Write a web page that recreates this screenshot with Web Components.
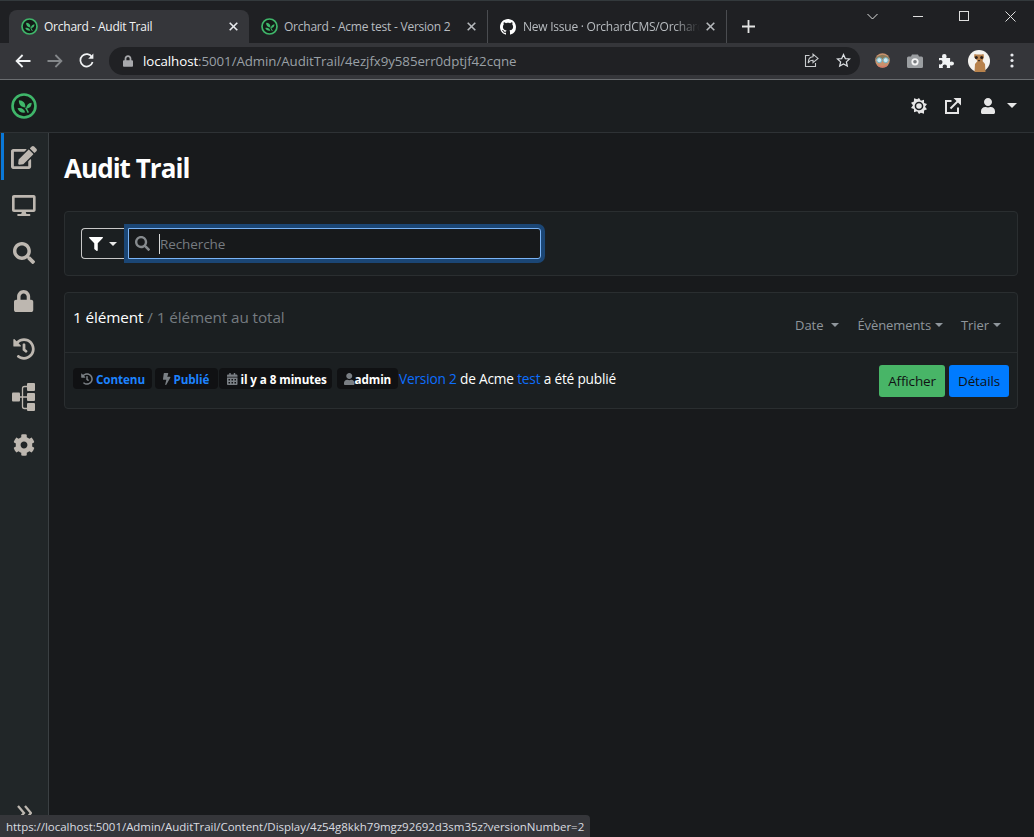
<!DOCTYPE html>
<html lang="fr"><head><meta charset="utf-8"><title>Orchard - Audit Trail</title>
<style>
html,body{margin:0;height:100%;background:#181a1c;overflow:hidden}
body{font-family:"Open Sans","Noto Sans","Liberation Sans",sans-serif}
</style></head><body>
<browser-window>
  <win-tabstrip slot="tabs">
    <browser-tab active label="Orchard - Audit Trail" icon="orchard"></browser-tab>
    <browser-tab label="Orchard - Acme test - Version 2" icon="orchard"></browser-tab>
    <browser-tab fade label="New Issue · OrchardCMS/OrchardCore" icon="github"></browser-tab>
  </win-tabstrip>
  <win-toolbar slot="toolbar"></win-toolbar>
  <admin-navbar slot="nav"></admin-navbar>
  <admin-sidebar slot="side"></admin-sidebar>
  <audit-page slot="main"></audit-page>
  <status-bubble slot="status">https://localhost:5001/Admin/AuditTrail/Content/Display/4z54g8kkh79mgz92692d3sm35z?versionNumber=2</status-bubble>
</browser-window>
<script>
const ICONS={
search:[512,512,"M505 442.7L405.3 343c-4.5-4.5-10.6-7-17-7H372c27.6-35.3 44-79.7 44-128C416 93.1 322.9 0 208 0S0 93.1 0 208s93.1 208 208 208c48.3 0 92.7-16.4 128-44v16.3c0 6.4 2.5 12.5 7 17l99.7 99.7c9.4 9.4 24.6 9.4 33.9 0l28.3-28.3c9.4-9.4 9.4-24.6.1-34zM208 336c-70.7 0-128-57.2-128-128 0-70.7 57.2-128 128-128 70.7 0 128 57.2 128 128 0 70.7-57.2 128-128 128z"],
lock:[448,512,"M400 224h-24v-72C376 68.2 307.8 0 224 0S72 68.2 72 152v72H48c-26.5 0-48 21.5-48 48v192c0 26.5 21.5 48 48 48h352c26.5 0 48-21.5 48-48V272c0-26.5-21.5-48-48-48zm-104 0H152v-72c0-39.7 32.3-72 72-72s72 32.3 72 72v72z"],
desktop:[576,512,"M528 0H48C21.5 0 0 21.5 0 48v320c0 26.5 21.5 48 48 48h192l-16 48h-72c-13.3 0-24 10.7-24 24s10.7 24 24 24h272c13.3 0 24-10.7 24-24s-10.7-24-24-24h-72l-16-48h192c26.5 0 48-21.5 48-48V48c0-26.5-21.5-48-48-48zm-16 352H64V64h448v288z"],
history:[512,512,"M504 255.531c.253 136.64-111.18 248.372-247.82 248.468-59.015.042-113.223-20.53-155.822-54.911-11.077-8.94-11.905-25.541-1.839-35.607l11.267-11.267c8.609-8.609 22.353-9.551 31.891-1.984C173.062 425.135 212.781 440 256 440c101.705 0 184-82.311 184-184 0-101.705-82.311-184-184-184-48.814 0-93.149 18.969-126.068 49.932l50.754 50.754c10.08 10.08 2.941 27.314-11.313 27.314H24c-8.837 0-16-7.163-16-16V38.627c0-14.254 17.234-21.393 27.314-11.314l49.372 49.372C129.209 34.136 189.552 8 256 8c136.81 0 247.747 110.78 248 247.531zm-180.912 78.784l9.823-12.63c8.138-10.463 6.253-25.542-4.21-33.679L288 256.349V152c0-13.255-10.745-24-24-24h-16c-13.255 0-24 10.745-24 24v135.651l65.409 50.874c10.463 8.137 25.541 6.253 33.679-4.21z"],
cog:[512,512,"M487.4 315.7l-42.6-24.6c4.3-23.2 4.3-47 0-70.2l42.6-24.6c4.9-2.8 7.1-8.6 5.5-14-11.1-35.6-30-67.8-54.7-94.6-3.8-4.1-10-5.1-14.8-2.3L380.8 110c-17.9-15.4-38.5-27.3-60.8-35.1V25.8c0-5.6-3.9-10.5-9.4-11.7-36.7-8.2-74.3-7.8-109.2 0-5.5 1.2-9.4 6.1-9.4 11.7V75c-22.2 7.9-42.8 19.8-60.8 35.1L88.7 85.5c-4.9-2.8-11-1.9-14.8 2.3-24.7 26.7-43.6 58.9-54.7 94.6-1.7 5.4.6 11.2 5.5 14L67.3 221c-4.3 23.2-4.3 47 0 70.2l-42.6 24.6c-4.9 2.8-7.1 8.6-5.5 14 11.1 35.6 30 67.8 54.7 94.6 3.8 4.1 10 5.1 14.8 2.3l42.6-24.6c17.9 15.4 38.5 27.3 60.8 35.1v49.2c0 5.6 3.9 10.5 9.4 11.7 36.7 8.2 74.3 7.8 109.2 0 5.5-1.2 9.4-6.1 9.4-11.7v-49.2c22.2-7.9 42.8-19.8 60.8-35.1l42.6 24.6c4.9 2.8 11 1.9 14.8-2.3 24.7-26.7 43.6-58.9 54.7-94.6 1.5-5.5-.7-11.3-5.6-14.1zM256 336c-44.1 0-80-35.9-80-80s35.9-80 80-80 80 35.9 80 80-35.9 80-80 80z"],
user:[448,512,"M224 256c70.7 0 128-57.3 128-128S294.7 0 224 0 96 57.3 96 128s57.3 128 128 128zm89.6 32h-16.7c-22.2 10.2-46.9 16-72.9 16s-50.6-5.8-72.9-16h-16.7C60.2 288 0 348.2 0 422.4V464c0 26.5 21.5 48 48 48h352c26.5 0 48-21.5 48-48v-41.6c0-74.2-60.2-134.4-134.4-134.4z"],
filter:[512,512,"M487.976 0H24.028C2.71 0-8.047 25.866 7.058 40.971L192 225.941V432c0 7.831 3.821 15.17 10.237 19.662l80 55.98C298.02 518.69 320 507.493 320 487.98V225.941l184.947-184.97C520.021 25.896 509.338 0 487.976 0z"],
bolt:[320,512,"M296 160H180.6l42.6-129.8C227.2 15 215.7 0 200 0H56C44 0 33.8 8.9 32.2 20.8l-32 240C-1.7 275.2 9.5 288 24 288h118.7L96.6 482.5c-3.6 15.2 8 29.5 23.3 29.5 8.4 0 16.4-4.4 20.8-12l176-304c9.3-15.9-2.2-36-20.7-36z"],
calendar:[448,512,"M0 464c0 26.5 21.5 48 48 48h352c26.5 0 48-21.5 48-48V192H0v272zm320-196c0-6.6 5.4-12 12-12h40c6.6 0 12 5.4 12 12v40c0 6.6-5.4 12-12 12h-40c-6.6 0-12-5.4-12-12v-40zm0 128c0-6.6 5.4-12 12-12h40c6.6 0 12 5.4 12 12v40c0 6.6-5.4 12-12 12h-40c-6.6 0-12-5.4-12-12v-40zM192 268c0-6.6 5.4-12 12-12h40c6.6 0 12 5.4 12 12v40c0 6.6-5.4 12-12 12h-40c-6.6 0-12-5.4-12-12v-40zm0 128c0-6.6 5.4-12 12-12h40c6.6 0 12 5.4 12 12v40c0 6.6-5.4 12-12 12h-40c-6.6 0-12-5.4-12-12v-40zM64 268c0-6.6 5.4-12 12-12h40c6.6 0 12 5.4 12 12v40c0 6.6-5.4 12-12 12H76c-6.6 0-12-5.4-12-12v-40zm0 128c0-6.6 5.4-12 12-12h40c6.6 0 12 5.4 12 12v40c0 6.6-5.4 12-12 12H76c-6.6 0-12-5.4-12-12v-40zM400 64h-48V16c0-8.8-7.2-16-16-16h-32c-8.8 0-16 7.2-16 16v48H160V16c0-8.8-7.2-16-16-16h-32c-8.8 0-16 7.2-16 16v48H48C21.5 64 0 85.5 0 112v48h448v-48c0-26.5-21.5-48-48-48z"],
edit:[576,512,"M402.6 83.2l90.2 90.2c3.8 3.8 3.8 10 0 13.8L274.4 405.6l-92.8 10.3c-12.4 1.4-22.9-9.1-21.5-21.5l10.3-92.8L388.8 83.2c3.8-3.8 10-3.8 13.8 0zm162-22.9l-48.8-48.8c-15.2-15.2-39.9-15.2-55.2 0l-35.4 35.4c-3.8 3.8-3.8 10 0 13.8l90.2 90.2c3.8 3.8 10 3.8 13.8 0l35.4-35.4c15.2-15.3 15.2-40 0-55.2zM384 346.2V448H64V128h229.8c3.2 0 6.2-1.3 8.5-3.5l40-40c7.6-7.6 2.2-20.5-8.5-20.5H48C21.5 64 0 85.5 0 112v352c0 26.5 21.5 48 48 48h352c26.5 0 48-21.5 48-48V306.2c0-10.7-12.9-16-20.5-8.5l-40 40c-2.2 2.3-3.5 5.3-3.5 8.5z"],
github:[16,16,"M8 0C3.58 0 0 3.58 0 8c0 3.54 2.29 6.53 5.47 7.59.4.07.55-.17.55-.38 0-.19-.01-.82-.01-1.49-2.01.37-2.53-.49-2.69-.94-.09-.23-.48-.94-.82-1.13-.28-.15-.68-.52-.01-.53.63-.01 1.08.58 1.23.82.72 1.21 1.87.87 2.33.66.07-.52.28-.87.51-1.07-1.78-.2-3.64-.89-3.64-3.95 0-.87.31-1.59.82-2.15-.08-.2-.36-1.02.08-2.12 0 0 .67-.21 2.2.82.64-.18 1.32-.27 2-.27.68 0 1.36.09 2 .27 1.53-1.04 2.2-.82 2.2-.82.44 1.1.16 1.92.08 2.12.51.56.82 1.27.82 2.15 0 3.07-1.87 3.75-3.65 3.95.29.25.54.73.54 1.48 0 1.07-.01 1.93-.01 2.2 0 .21.15.46.55.38A8.013 8.013 0 0016 8c0-4.42-3.58-8-8-8z"]
};
class Base extends HTMLElement{
  render(h){if(!this.shadowRoot)this.attachShadow({mode:'open'});this.shadowRoot.innerHTML=h}
}
const svg=(n,fill)=>{const[w,h,d]=ICONS[n];return `<svg viewBox="0 0 ${w} ${h}" width="100%" height="100%" fill="${fill||'currentColor'}"><path d="${d}"/></svg>`};
class FaIcon extends Base{connectedCallback(){
  const n=this.getAttribute('name'),s=this.getAttribute('size')||14;
  const[w,h]=ICONS[n];
  this.render(`<style>:host{display:inline-flex;flex:none;width:${s*w/h}px;height:${s}px;color:inherit}svg{display:block}</style>${svg(n)}`);
}}
customElements.define('fa-icon',FaIcon);
class OrchardLogo extends Base{connectedCallback(){
  const s=this.getAttribute('size')||16;
  this.render(`<style>:host{display:inline-flex;flex:none;width:${s}px;height:${s}px}svg{display:block}</style>
  <svg viewBox="0 0 24 24" width="100%" height="100%"><circle cx="12" cy="12" r="10.6" fill="#141a17" stroke="#3fb66a" stroke-width="2.4"/>
  <path d="M13.200 13.400C9.200 13.200 6.900 10.600 7.300 6.800 11.200 6.900 13.600 9.500 13.200 13.400Z" fill="#3fb66a"/>
  <path d="M14 14.200C14.200 11.200 16 9.200 19 8.900 19.200 12 17.200 14.200 14 14.200Z" fill="#3fb66a"/>
  <path d="M13.200 18C10 18.600 7.300 17.200 6 14.200 9.400 13.200 12.200 14.800 13.200 18Z" fill="#3fb66a"/>
  <path d="M13.600 13.600L16 18.200" stroke="#3fb66a" stroke-width="1.400"/></svg>`);
}}
customElements.define('orchard-logo',OrchardLogo);
class BrowserWindow extends Base{connectedCallback(){
  this.render(`<style>
  :host{display:flex;flex-direction:column;position:relative;width:1034px;height:837px;overflow:hidden;background:#181a1c;color:#fff}
  .body{flex:1;display:flex;min-height:0}
  ::slotted([slot=main]){flex:1;min-width:0}
  </style>
  <slot name="tabs"></slot><slot name="toolbar"></slot><slot name="nav"></slot>
  <div class="body"><slot name="side"></slot><slot name="main"></slot></div>
  <slot name="status"></slot>`);
}}
customElements.define('browser-window',BrowserWindow);
class WinTabstrip extends Base{connectedCallback(){
  this.render(`<style>
  :host{display:flex;height:43px;background:#1f2023;box-sizing:border-box;padding:9px 1px 0 9px;position:relative;border-top:1px solid #33393c}
  .tabs{display:flex;height:33px}
  .new{width:42px;height:26px;display:flex;align-items:center;justify-content:center;color:#e3e3e3;margin-top:3px}
  .ctl{margin-left:auto;margin-top:-9px;display:flex;height:30px;color:#dfdfdf}
  .ctl span{width:46px;display:flex;align-items:center;justify-content:center}
  svg{display:block}
  </style>
  <div class="tabs"><slot></slot></div>
  <div class="new"><svg width="13" height="13" viewBox="0 0 13 13"><path d="M6.500 0v13M0 6.500h13" stroke="currentColor" stroke-width="1.800"/></svg></div>
  <div class="ctl">
   <span><svg width="11" height="7" viewBox="0 0 11 7"><path d="M.5 1l5 5 5-5" fill="none" stroke="currentColor"/></svg></span>
   <span><svg width="10" height="1"><rect width="10" height="1" fill="currentColor"/></svg></span>
   <span><svg width="10" height="10"><rect x=".5" y=".5" width="9" height="9" fill="none" stroke="currentColor"/></svg></span>
   <span><svg width="11" height="11" viewBox="0 0 11 11"><path d="M.5.5l10 10M10.500.5l-10 10" stroke="currentColor"/></svg></span>
  </div>`);
}}
customElements.define('win-tabstrip',WinTabstrip);
class BrowserTab extends Base{connectedCallback(){
  const a=this.hasAttribute('active'),ic=this.getAttribute('icon');
  const mask=this.hasAttribute('fade')?'-webkit-mask-image:linear-gradient(90deg,#000 85%,transparent);':'';
  this.render(`<style>
  :host{display:flex;align-items:center;box-sizing:border-box;width:${a?240:239}px;height:33px;padding:0 11px 0 ${a?11:11}px;${a?'background:#35363a;border-radius:8px 8px 0 0;':''}position:relative;font:12px "Open Sans","Noto Sans",sans-serif;color:${a?'#f1f3f4':'#b8bcc0'};${a?'':'border-right:1px solid #4a4c50;background-clip:padding-box;'}}
  .ic{display:flex;width:18px;height:18px;margin-right:6px;flex:none;color:#fff;align-items:center;justify-content:center}
  .t{flex:1;white-space:nowrap;overflow:hidden;letter-spacing:-.24px;${mask}}
  svg{display:block}
  </style>
  <span class="ic">${ic==='github'?`<fa-icon name="github" size="16"></fa-icon>`:`<orchard-logo size="17"></orchard-logo>`}</span>
  <span class="t">${this.getAttribute('label')}</span>
  <svg width="9" height="9" viewBox="0 0 9 9" style="flex:none;margin-left:6px"><path d="M.7.7l7.600 7.600M8.300.7L.7 8.300" stroke="${a?'#e8eaed':'#b5b8bc'}" stroke-width="1.600"/></svg>`);
}}
customElements.define('browser-tab',BrowserTab);
class WinToolbar extends Base{connectedCallback(){
  this.render(`<style>
  :host{display:flex;align-items:center;height:37px;box-sizing:border-box;background:#35363a;border-bottom:1px solid #6a6d70;padding:0 0 1px 0;color:#dcdfe2}
  .nav{display:flex;width:109px;flex:none;padding-left:15px;box-sizing:border-box;gap:16px;align-items:center}
  .omni{width:751px;height:28px;border-radius:14px;background:#202124;display:flex;align-items:center;box-sizing:border-box;padding-left:14px;flex:none;font:13.300px "Open Sans","Noto Sans",sans-serif;letter-spacing:-.07px;color:#9aa0a6}
  .omni b{font-weight:400;color:#fff}
  .url{margin-left:10px;flex:1;white-space:nowrap}
  .r{display:flex;gap:17px;padding-right:9px;align-items:center;color:#c9ccce}
  .ext{display:flex;align-items:center;flex:none}
  svg{display:block}
  </style>
  <div class="nav">
   <svg width="16" height="14" viewBox="0 0 16 14"><path d="M15.500 7H2M7.600 1L1.600 7l6 6" fill="none" stroke="#f1f3f4" stroke-width="1.800"/></svg>
   <svg width="16" height="14" viewBox="0 0 16 14"><path d="M.5 7H14M8.400 1l6 6-6 6" fill="none" stroke="#84878a" stroke-width="1.800"/></svg>
   <svg width="15" height="15" viewBox="0 0 15 15"><path d="M13 4.200A6.200 6.200 0 1 0 13.600 9" fill="none" stroke="#f1f3f4" stroke-width="1.700"/><path d="M14.400.6v5.200H9.200z" fill="#f1f3f4"/></svg>
  </div>
  <div class="omni">
   <svg width="10" height="12" viewBox="0 0 448 512" fill="#a8a9ac"><path d="${ICONS.lock[2]}"/></svg>
   <span class="url"><b>localhost</b>:5001/Admin/AuditTrail/4ezjfx9y585err0dptjf42cqne</span>
   <span class="r">
    <svg width="15" height="15" viewBox="0 0 15 15" fill="none" stroke="#c9ccce" stroke-width="1.100"><path d="M5.500 2.500H1.500v11h10V10"/><path d="M9 1.200l5 4.200-5 4.200V7.200C6.500 7.200 5 8.200 4.200 10 4.200 6.500 6 4 9 3.800z"/></svg>
    <svg width="15" height="15" viewBox="0 0 24 24" fill="none" stroke="#dcdfe2" stroke-width="2"><path d="M12 2.500l2.900 6.400 6.900.7-5.200 4.600 1.500 6.800-6.100-3.500-6.100 3.500 1.500-6.800-5.200-4.600 6.900-.7z"/></svg>
   </span>
  </div>
  <div class="ext" style="margin-left:15px"><svg width="15" height="15" viewBox="0 0 15 15"><circle cx="7.500" cy="7.500" r="7.300" fill="#c9926d"/><path d="M1 4.500Q7.500 -1 14 4.500V6H1z" fill="#8a7a5a"/><circle cx="4.300" cy="7.200" r="2.500" fill="#cfe8ef" stroke="#6fb5c8"/><circle cx="10.700" cy="7.200" r="2.500" fill="#cfe8ef" stroke="#6fb5c8"/><path d="M3 11.500q4.500 3 9 0v1.800q-4.500 2.400-9 0z" fill="#d77a66"/></svg></div>
  <div class="ext" style="margin-left:17px"><svg width="16" height="14" viewBox="0 0 16 14"><path d="M1.500 2.500H4L5 .5h6l1 2h2.500q1.500 0 1.500 1.500v8.500q0 1.500-1.500 1.500h-13Q0 14 0 12.500V4q0-1.500 1.500-1.500z" fill="#9b9ea1"/><circle cx="8" cy="7.800" r="3.600" fill="#f4f4f4"/><circle cx="8" cy="7.800" r="1.800" fill="#7a7d80"/></svg></div>
  <div class="ext" style="margin-left:16px"><svg width="15" height="15" viewBox="0 0 15 15"><path d="M0 5h3.500Q3 4.500 3 3.300 3 1 5.300 1t2.300 2.300q0 1.200-.5 1.700h4V9q.5-.5 1.500-.5Q15 8.500 15 10.500t-2.400 2q-1 0-1.500-.5v3H7.500q.5-.5.500-1.500 0-2-2.200-2t-2.200 2q0 1 .5 1.500H0v-4q.5.500 1.500.500Q3.500 11 3.500 9T1.500 7Q.5 7 0 7.500z" fill="#f1f3f4"/></svg></div>
  <div class="ext" style="margin-left:14px"><svg width="22" height="22" viewBox="0 0 22 22"><circle cx="11" cy="11" r="11" fill="#f5f3ef"/><path d="M6.500 4l2 .5h5l2-.5.5 3-1.500 4 2.500 3 .5 8h-11l.5-8 2.500-3L6 7z" fill="#b8824c"/><circle cx="8.300" cy="7.500" r="1.500" fill="#2d211a"/><circle cx="13.700" cy="7.500" r="1.500" fill="#2d211a"/><path d="M9.800 10h2.400L11 11.800z" fill="#2d211a"/></svg></div>
  <div class="ext" style="margin-left:20px"><svg width="4" height="15" viewBox="0 0 4 15" fill="#e8eaed"><circle cx="2" cy="2" r="1.600"/><circle cx="2" cy="7.500" r="1.600"/><circle cx="2" cy="13" r="1.600"/></svg></div>`);
}}
customElements.define('win-toolbar',WinToolbar);
class AdminNavbar extends Base{connectedCallback(){
  this.render(`<style>
  :host{display:flex;align-items:center;height:53px;box-sizing:border-box;background:#1b1e20;border-bottom:1px solid #2e3235;padding:0 17px 0 11px;color:#e6e6e6}
  .r{margin-left:auto;display:flex;align-items:center}
  svg{display:block}
  .car{width:0;height:0;border:5px solid transparent;border-top-color:#e6e6e6;border-bottom:0;margin-left:12px;margin-top:-2px}
  </style>
  <orchard-logo size="26"></orchard-logo>
  <div class="r">
   <svg width="16" height="16" viewBox="0 0 24 24" fill="#e6e6e6"><path fill-rule="evenodd" d="M12 0l2.800 4 4.700-1.500.1 4.900 4.400 1.700-3 3.900 3 3.900-4.400 1.700-.1 4.900-4.700-1.500L12 24l-2.800-4-4.700 1.500-.1-4.900L0 14.900 3 11 0 7.100l4.400-1.700.1-4.900L9.200 2zM12 5.500a6.500 6.500 0 1 0 0 13 6.500 6.500 0 0 0 0-13zm0 2.300a4.200 4.200 0 1 1 0 8.400 4.200 4.200 0 0 1 0-8.400z"/></svg>
   <svg style="margin-left:18px" width="16" height="16" viewBox="0 0 16 16" fill="none" stroke="#e6e6e6" stroke-width="2"><path d="M6.500 3H1v12h12V9.500"/><path d="M5.500 10.500L15 1"/><path d="M8.500 0H16v7.500z" fill="#e6e6e6" stroke="none"/></svg>
   <fa-icon style="margin-left:20px" name="user" size="16"></fa-icon>
   <span class="car"></span>
  </div>`);
}}
customElements.define('admin-navbar',AdminNavbar);
class SideItem extends Base{connectedCallback(){
  this.render(`<style>
  :host{display:flex;height:48px;align-items:center;justify-content:center;color:#bdb7b0;position:relative;box-sizing:border-box}
  :host([active])::before{content:"";position:absolute;left:1px;top:0;bottom:1px;width:3px;background:#0a78d8}
  </style><slot></slot>`);
}}
customElements.define('side-item',SideItem);
class AdminSidebar extends Base{connectedCallback(){
  this.render(`<style>
  :host{display:flex;flex-direction:column;flex:none;width:49px;box-sizing:border-box;background:#212628;border-right:1px solid #3b4043;color:#bdb7b0;height:100%}
  .foot{margin-top:auto;height:32px;display:flex;justify-content:center;box-sizing:border-box}
  svg{display:block}
  </style>
  <side-item active><fa-icon name="edit" size="23"></fa-icon></side-item>
  <side-item><fa-icon name="desktop" size="21"></fa-icon></side-item>
  <side-item><fa-icon name="search" size="22"></fa-icon></side-item>
  <side-item><fa-icon name="lock" size="22"></fa-icon></side-item>
  <side-item><fa-icon name="history" size="22"></fa-icon></side-item>
  <side-item><svg width="24" height="29" viewBox="0 0 24 29" fill="#bdb7b0"><rect x="0" y="9.500" width="8" height="9" rx="1"/><rect x="15" y="0" width="8" height="8" rx="1"/><rect x="15" y="10" width="8" height="8" rx="1"/><rect x="15" y="20" width="8" height="8" rx="1"/><path d="M8 14h7M15 3.500h-2.500q-2 0-2 2v18q0 2 2 2H15" fill="none" stroke="#bdb7b0" stroke-width="1.300"/></svg></side-item>
  <side-item><fa-icon name="cog" size="22"></fa-icon></side-item>
  <div class="foot"><svg width="15" height="16" viewBox="0 0 15 16" fill="none" stroke="#bdb7b0" stroke-width="2.300"><path d="M1 1l6 7-6 7M8 1l6 7-6 7"/></svg></div>`);
}}
customElements.define('admin-sidebar',AdminSidebar);
class ACard extends Base{connectedCallback(){
  this.render(`<style>:host{display:block;background:#1b1f21;border:1px solid #2a2e30;border-radius:4px;box-sizing:border-box}</style><slot></slot>`);
}}
customElements.define('a-card',ACard);
class TagBadge extends Base{connectedCallback(){
  this.render(`<style>
  :host{display:inline-flex;align-items:center;height:21px;box-sizing:border-box;background:#101113;border-radius:4px;font:700 11.700px "Open Sans","Noto Sans",sans-serif;letter-spacing:-.1px;white-space:nowrap;color:var(--c,#fff);flex:none}
  ::slotted(fa-icon){color:#7a7f84}
  </style><slot></slot>`);
}}
customElements.define('tag-badge',TagBadge);
class DropLink extends Base{connectedCallback(){
  this.render(`<style>
  :host{display:inline-flex;align-items:center;color:#8f969c;font-size:13px;letter-spacing:-.08px;white-space:nowrap}
  .c{width:0;height:0;border:4px solid transparent;border-top-color:#8f969c;border-bottom:0;margin-left:var(--g,4px)}
  </style><slot></slot><span class="c"></span>`);
}}
customElements.define('drop-link',DropLink);
class AuditPage extends Base{connectedCallback(){
  this.render(`<style>
  :host{display:block;box-sizing:border-box;padding:0 16px 0 15px;background:#181a1c;color:#fff;font:14px "Open Sans","Noto Sans",sans-serif}
  h1{margin:0;height:78px;box-sizing:border-box;padding-top:16px;font:700 26px/38px "Open Sans","Noto Sans",sans-serif;letter-spacing:-.95px;color:#fff}
  .filter{height:65px;display:block;margin-bottom:16px}
  .fin{display:flex;padding:16px 0 0 16px}
  .fbtn{display:flex;align-items:center;justify-content:center;gap:6px;box-sizing:border-box;width:47px;height:31px;border:1px solid #c8c8c8;border-radius:4px 0 0 4px;border-right:0;padding-right:5px}
  .car{width:0;height:0;border:4.500px solid transparent;border-top-color:#e8e8e8;border-bottom:0}
  .inp{display:flex;align-items:center;box-sizing:border-box;width:413px;height:31px;border:1px solid #7ab3f5;border-radius:0 3px 3px 0;background:#17191b;box-shadow:0 0 0 4px #1b4675;padding-left:6px;color:#868a8e}
  .ph{font-size:13.500px;margin-left:9px;border-left:1px solid #d8d8d8;height:20px;line-height:21px;color:#767b80;letter-spacing:-.1px}
  .head{display:flex;justify-content:space-between;height:60px;border-bottom:1px solid #2a2e30;box-sizing:border-box;padding:0 16px 0 8px}
  .cnt{font-size:15.300px;line-height:22px;padding-top:13px;letter-spacing:-.1px;color:#fff}
  .cnt span{color:#757b80}
  .dd{display:flex;gap:18px;padding-top:20px;height:24px}
  .row{display:flex;justify-content:space-between;align-items:center;height:55px;padding:0 8px;box-sizing:border-box}
  .l{display:flex;align-items:center;margin-top:-4px;font-size:13.700px;letter-spacing:-.2px;white-space:nowrap}
  .l a{color:#0d6efd;text-decoration:none}
  .gap{width:3px}
  .btns{display:flex;gap:4px}
  .b{display:flex;align-items:center;justify-content:center;height:32px;border-radius:3px;color:#101214;font-size:13.500px;letter-spacing:-.15px;box-sizing:border-box}
  .g{background:#48b567;width:66px}.bl{background:#007bff;width:60px}
  .at{--c:#1d83ff}
  tag-badge fa-icon{margin-right:3px}
  </style>
  <h1>Audit Trail</h1>
  <a-card class="filter"><div class="fin">
    <div class="fbtn"><fa-icon name="filter" size="14"></fa-icon><span class="car"></span></div>
    <div class="inp"><fa-icon name="search" size="15"></fa-icon><div class="ph">Recherche</div></div>
  </div></a-card>
  <a-card>
    <div class="head">
      <div class="cnt">1 élément <span>/ 1 élément au total</span></div>
      <div class="dd"><drop-link style="--g:8px">Date</drop-link><drop-link>Évènements</drop-link><drop-link>Trier</drop-link></div>
    </div>
    <div class="row">
      <div class="l">
        <tag-badge class="at" style="padding:0 8px;width:79px"><fa-icon name="history" size="12"></fa-icon>Contenu</tag-badge>
        <span class="gap"></span>
        <tag-badge class="at" style="padding:0 8px;width:63px"><fa-icon name="bolt" size="12"></fa-icon>Publié</tag-badge>
        <tag-badge style="padding:0 6px 0 8px;width:113px;margin-left:1px"><fa-icon name="calendar" size="12"></fa-icon>il y a 8 minutes</tag-badge>
        <tag-badge style="padding:0 7px;width:61px;margin-left:5px"><fa-icon name="user" size="12" style="margin-right:0"></fa-icon>admin</tag-badge>
        <span style="margin-left:1px"><a>Version 2</a> de Acme <a>test</a> a été publié</span>
      </div>
      <div class="btns"><div class="b g">Afficher</div><div class="b bl">Détails</div></div>
    </div>
  </a-card>`);
}}
customElements.define('audit-page',AuditPage);
class StatusBubble extends Base{connectedCallback(){
  this.render(`<style>
  :host{position:absolute;left:0;bottom:0;height:22px;box-sizing:border-box;padding:0 6px;background:#35363a;border-radius:0 4px 0 0;display:flex;align-items:center;font:11.500px "Open Sans","Noto Sans",sans-serif;letter-spacing:-.035px;color:#dadce0;white-space:nowrap}
  </style><slot></slot>`);
}}
customElements.define('status-bubble',StatusBubble);
</script>
</body></html>
